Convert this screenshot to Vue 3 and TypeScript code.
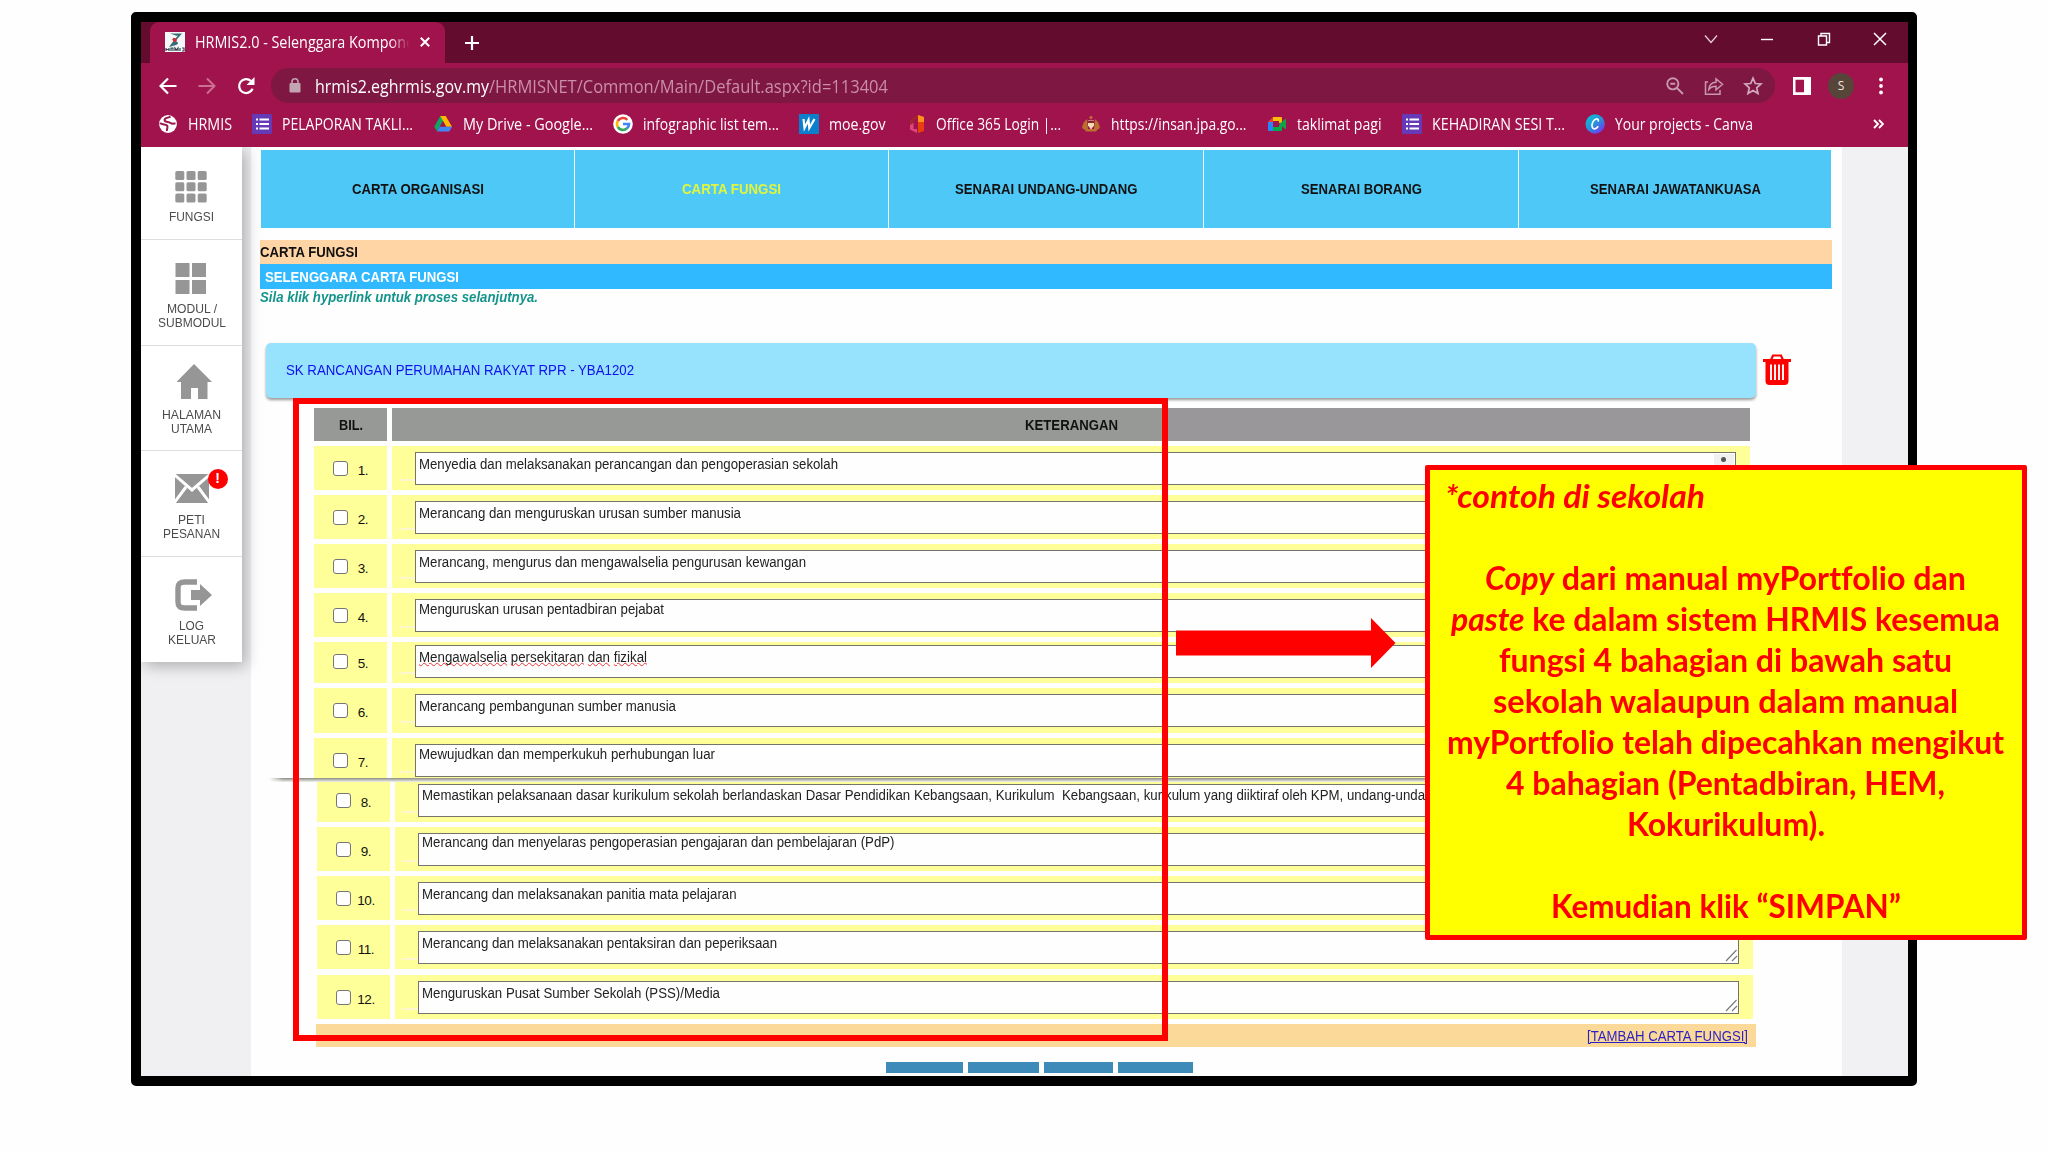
<script setup lang="ts">
import type { Directive } from 'vue'

/* Fits a single line of text to a known width in pixels. */
const vFit: Directive<HTMLElement, number> = {
  mounted(el, { value }) {
    const natural = el.getBoundingClientRect().width
    el.style.width = `${value}px`
    el.style.transform = `scaleX(${value / natural})`
  },
}

interface Bookmark { icon: string; label: string; w: number }
const bookmarks: Bookmark[] = [
  { icon: 'globe', label: 'HRMIS', w: 44 },
  { icon: 'form', label: 'PELAPORAN TAKLI...', w: 131 },
  { icon: 'drive', label: 'My Drive - Google...', w: 130 },
  { icon: 'google', label: 'infographic list tem...', w: 136 },
  { icon: 'moe', label: 'moe.gov', w: 56.5 },
  { icon: 'office', label: 'Office 365 Login |...', w: 125 },
  { icon: 'crest', label: 'https://insan.jpa.go...', w: 135.5 },
  { icon: 'meet', label: 'taklimat pagi', w: 84.5 },
  { icon: 'form', label: 'KEHADIRAN SESI T...', w: 133 },
  { icon: 'canva', label: 'Your projects - Canva', w: 138 },
]

interface MenuItem { icon: string; lines: [string, number][]; h: number }
const menu: MenuItem[] = [
  { icon: 'grid9', lines: [['FUNGSI', 45]], h: 93 },
  { icon: 'grid4', lines: [['MODUL /', 50], ['SUBMODUL', 68]], h: 106 },
  { icon: 'home', lines: [['HALAMAN', 59], ['UTAMA', 41]], h: 105 },
  { icon: 'mail', lines: [['PETI', 27], ['PESANAN', 57]], h: 106 },
  { icon: 'exit', lines: [['LOG', 25], ['KELUAR', 48]], h: 105 },
]

const tabs = [
  { label: 'CARTA ORGANISASI', w: 132, cell: 314 },
  { label: 'CARTA FUNGSI', w: 99, cell: 314 , active: true },
  { label: 'SENARAI UNDANG-UNDANG', w: 182.5, cell: 315 },
  { label: 'SENARAI BORANG', w: 121, cell: 315 },
  { label: 'SENARAI JAWATANKUASA', w: 171, cell: 312 },
]

/* h: row height, gap: space above, box: offset of the field, text: offset of its text line */
interface Row { n: number; label: string; w: number; h: number; gap: number; box: number; text: number; check: number; spell?: boolean; grip?: boolean; spin?: boolean }
const firstRows: Row[] = [
  { n: 1, label: 'Menyedia dan melaksanakan perancangan dan pengoperasian sekolah', w: 419, h: 44, gap: 5, box: 6, text: 1, check: 15, spin: true },
  { n: 2, label: 'Merancang dan menguruskan urusan sumber manusia', w: 322, h: 44, gap: 5, box: 6, text: 1, check: 15 },
  { n: 3, label: 'Merancang, mengurus dan mengawalselia pengurusan kewangan', w: 387, h: 44, gap: 5, box: 6, text: 1, check: 15 },
  { n: 4, label: 'Menguruskan urusan pentadbiran pejabat', w: 245, h: 44, gap: 5, box: 6, text: -1, check: 15 },
  { n: 5, label: 'Mengawalselia persekitaran dan fizikal', w: 228, h: 41, gap: 5, box: 3, text: 1, check: 12, spell: true },
  { n: 6, label: 'Merancang pembangunan sumber manusia', w: 257, h: 45, gap: 5, box: 6, text: 1, check: 15 },
  { n: 7, label: 'Mewujudkan dan memperkukuh perhubungan luar', w: 296, h: 40, gap: 5, box: 6, text: -1, check: 15 },
]
const secondRows: Row[] = [
  { n: 8, label: 'Memastikan pelaksanaan dasar kurikulum sekolah berlandaskan Dasar Pendidikan Kebangsaan, Kurikulum\u00a0 Kebangsaan, kurikulum yang diiktiraf oleh KPM, undang-unda', w: 1003, h: 40, gap: 4, box: 2, text: 0, check: 11 },
  { n: 9, label: 'Merancang dan menyelaras pengoperasian pengajaran dan pembelajaran (PdP)', w: 472.5, h: 44, gap: 5, box: 6, text: -2, check: 15 },
  { n: 10, label: 'Merancang dan melaksanakan panitia mata pelajaran', w: 314.5, h: 44, gap: 5, box: 6, text: 1, check: 15 },
  { n: 11, label: 'Merancang dan melaksanakan pentaksiran dan peperiksaan', w: 355, h: 44, gap: 5, box: 6, text: 1, check: 15, grip: true },
  { n: 12, label: 'Menguruskan Pusat Sumber Sekolah (PSS)/Media', w: 298, h: 44, gap: 6, box: 6, text: 1, check: 15, grip: true },
]
const sections = [
  { id: 'a', rows: firstRows },
  { id: 'b', rows: secondRows },
]
const buttons = [77, 71, 69, 75]
</script>

<template>
  <div class="slide">
    <div class="frame">
      <div class="tabstrip">
        <div class="tab">
          <svg width="20" height="20" viewBox="0 0 20 20">
            <rect width="20" height="20" fill="#f4f8f8" />
            <path d="M5 1.500h12L10.500 9c3 1 3.500 3 .5 4l-7 2 3-4 2-2.500-2-1 4-4z" fill="#356c78" />
            <path d="M8 4.500l5-1-3 3.500z" fill="#fff" /><circle cx="9.800" cy="8" r="2.100" fill="#d82930" />
            <path d="M1 16v3M4 16v3M1 17.500h3M6 19v-3h2v3M10 19v-3l1.500 2 1.500-2v3M15 16v3M17 19h2v-3h-2" stroke="#345" stroke-width="1.200" fill="none" />
          </svg>
          <span class="tab-title"><span v-fit="219" class="fit">HRMIS2.0 - Selenggara Kompone</span></span>
          <svg class="tab-x" width="10" height="10" viewBox="0 0 10 10"><path d="M.8.8l8.400 8.400M9.200.8L.8 9.200" stroke="#fff" stroke-width="2" /></svg>
        </div>
        <svg class="plus" width="16" height="16" viewBox="0 0 16 16"><path d="M8 1v14M1 8h14" stroke="#fff" stroke-width="2.200" /></svg>
        <div class="win">
          <svg width="14" height="14" viewBox="0 0 14 14"><path d="M1 3.500L7 10.500l6-7" fill="none" stroke="#e9d3dc" stroke-width="1.200" /></svg>
          <svg width="14" height="14" viewBox="0 0 14 14"><path d="M1 7.500h12" stroke="#fff" stroke-width="1.400" /></svg>
          <svg width="14" height="14" viewBox="0 0 14 14"><path d="M1.500 4h8v9h-8zM4 4V1.500h8.500v9H9.500" fill="none" stroke="#fff" stroke-width="1.400" /></svg>
          <svg width="14" height="14" viewBox="0 0 14 14"><path d="M1 1l12 12M13 1L1 13" stroke="#fff" stroke-width="1.500" /></svg>
        </div>
      </div>

      <div class="toolbar">
        <svg class="nav" width="18" height="18" viewBox="0 0 18 18"><path d="M17.500 9H2M9 1.500L1.500 9 9 16.500" fill="none" stroke="#fff" stroke-width="2.200" /></svg>
        <svg class="nav" width="18" height="18" viewBox="0 0 18 18"><path d="M.5 9H16M9 1.500L16.500 9 9 16.500" fill="none" stroke="#cc6f95" stroke-width="2" /></svg>
        <svg class="nav" width="18" height="18" viewBox="0 0 18 18"><path d="M15.600 11.800A7 7 0 1 1 14 4" fill="none" stroke="#fff" stroke-width="2.300" /><path d="M17.500 0v8h-8z" fill="#fff" /></svg>
        <div class="omnibox">
          <svg width="12" height="15" viewBox="0 0 12 15"><rect x=".5" y="5" width="11" height="9.500" rx="1" fill="#c2a4b2" /><path d="M3 6V3.800a3 3 0 0 1 6 0V6" fill="none" stroke="#c2a4b2" stroke-width="1.600" /></svg>
          <span class="url"><span v-fit="174" class="fit host">hrmis2.eghrmis.gov.my</span><span v-fit="399" class="fit path">/HRMISNET/Common/Main/Default.aspx?id=113404</span></span>
          <div class="omni-icons">
            <svg width="20" height="20" viewBox="0 0 20 20" fill="none" stroke="#c897ad" stroke-width="1.900"><circle cx="7.800" cy="7.800" r="5.600" /><path d="M12 12l6 6M5.300 7.800h5" /></svg>
            <svg width="20" height="20" viewBox="0 0 20 20" fill="none" stroke="#c897ad" stroke-width="1.500"><path d="M4 6H1.500v12.200h14.500V14" /><path d="M4.800 13.500c.4-4.500 3-7 7.200-7.200V2.800l6.500 5.500-6.500 5.500v-3.500c-3.500 0-5.500 1-7.200 3.200z" /></svg>
            <svg width="20" height="20" viewBox="0 0 20 20" fill="none" stroke="#d3aabd" stroke-width="1.700"><path d="M10 2.200l2.300 5.300 5.700.5-4.300 3.800 1.300 5.700-5-3-5 3 1.300-5.700L2 8l5.700-.5z" /></svg>
          </div>
        </div>
        <svg class="panel" width="18" height="18" viewBox="0 0 18 18"><path d="M0 0h18v18H0zM2.500 2.800v12.400h8.500V2.800z" fill="#fff" fill-rule="evenodd" /></svg>
        <span class="avatar">S</span>
        <svg class="dots" width="6" height="18" viewBox="0 0 6 18" fill="#fff"><circle cx="3" cy="2.500" r="1.900" /><circle cx="3" cy="9" r="1.900" /><circle cx="3" cy="15.500" r="1.900" /></svg>
      </div>

      <div class="bookmarks">
        <div v-for="b in bookmarks" :key="b.label" class="bookmark">
          <svg v-if="b.icon === 'globe'" width="20" height="20" viewBox="0 0 20 20"><circle cx="10" cy="10" r="8.900" fill="#fff" /><path d="M12.500 2.500c-2 1.500-6 1-6 3.500s4 1.500 6 3c1.500 1.200 3.500.5 5 .5M2 9c2 2 5.500 1 7 2.500s-.5 3 0 5.500" stroke="#9b174c" stroke-width="2" fill="none" /></svg>
          <svg v-else-if="b.icon === 'form'" width="20" height="20" viewBox="0 0 20 20"><rect width="20" height="20" rx="1" fill="#6639b7" /><path d="M4 5.500h2M4 10h2M4 14.500h2M7.500 5.500H17M7.500 10H17M7.500 14.500H17" stroke="#fff" stroke-width="2.200" /></svg>
          <svg v-else-if="b.icon === 'drive'" width="20" height="20" viewBox="0 0 20 20"><path d="M7.300 2h5.400L10 6.700 4 17.500l-2.700-4.800z" fill="#13a463" /><path d="M7.300 2h5.400l6.300 10.700h-5.600z" fill="#ffba00" /><path d="M6.700 12.700H19l-2.700 4.800H4z" fill="#4285f4" /></svg>
          <svg v-else-if="b.icon === 'google'" width="20" height="20" viewBox="0 0 20 20"><circle cx="10" cy="10" r="9.800" fill="#fff" /><g fill="none" stroke-width="2.600"><path d="M14.300 5.800A6 6 0 0 0 4.800 7" stroke="#ea4335" /><path d="M4.800 7a6 6 0 0 0 0 6" stroke="#fbbc05" /><path d="M4.800 13a6 6 0 0 0 9 1.600" stroke="#34a853" /><path d="M13.800 14.600A6 6 0 0 0 16 10h-6" stroke="#4285f4" /></g></svg>
          <svg v-else-if="b.icon === 'moe'" width="20" height="20" viewBox="0 0 20 20"><rect width="20" height="20" fill="#0b7fcb" /><path d="M4.500 5l1 9 4-8 .8 8L15.500 5" fill="none" stroke="#fff" stroke-width="2.200" /></svg>
          <svg v-else-if="b.icon === 'office'" width="20" height="20" viewBox="0 0 20 20"><path d="M4 6l8-5v3L7.500 6v7L4 15z" fill="#a4262c" /><path d="M4 11v4.500l7 3.500v-4H7.500V9z" fill="#e0467c" /><path d="M12 1l6 2v14l-6 2z" fill="#e8400c" /><path d="M12 1l6 2v5h-6z" fill="#ff8f1f" /></svg>
          <svg v-else-if="b.icon === 'crest'" width="20" height="20" viewBox="0 0 20 20"><path d="M10 1.500l2 2-2 2-2-2zM3 8l3-3 1 10H2l-1-2zM17 8l-3-3-1 10h5l1-2zM3 15h14l-2 2.500H5z" fill="#b9702f" /><path d="M7 6.500h6v5l-3 4-3-4z" fill="#f5d9b0" /><path d="M7 7h6v2H7z" fill="#8a2432" /></svg>
          <svg v-else-if="b.icon === 'meet'" width="20" height="20" viewBox="0 0 20 20"><path d="M6 3h8a1 1 0 0 1 1 1v5h-3V7H6z" fill="#fbbc04" /><path d="M6 3v5H1z" fill="#ea4335" /><path d="M1 8h5v9H2a1 1 0 0 1-1-1z" fill="#2684fc" /><path d="M6 13h6v-2h3v5a1 1 0 0 1-1 1H6z" fill="#00ac47" /><path d="M12 10l7-5.500v11z" fill="#11a24c" /></svg>
          <svg v-else width="20" height="20" viewBox="0 0 20 20"><defs><linearGradient id="cv" x1="0" y1="0" x2=".8" y2="1"><stop offset="0" stop-color="#0cc" /><stop offset=".55" stop-color="#2a8fdd" /><stop offset="1" stop-color="#7b2ff0" /></linearGradient></defs><circle cx="10.200" cy="10" r="9.700" fill="url(#cv)" /><path d="M13 7.500c1-2-.5-3-2-2.500-3 1-4.500 5-3.800 8 .7 2.500 4 2.500 6-.7" fill="none" stroke="#fff" stroke-width="1.700" /></svg>
          <span v-fit="b.w" class="fit">{{ b.label }}</span>
        </div>
        <svg class="more" width="11" height="10" viewBox="0 0 11 10"><path d="M1 1l4 4-4 4M6 1l4 4-4 4" fill="none" stroke="#fff" stroke-width="1.900" /></svg>
      </div>

      <div class="page">
        <aside class="rail">
          <nav class="menu">
            <div v-for="m in menu" :key="m.icon" class="menu-item" :style="{ height: m.h + 'px' }">
              <span class="menu-icon">
                <svg v-if="m.icon === 'grid9'" width="32" height="32" viewBox="0 0 32 32" fill="#969696"><template v-for="r in 3" :key="r"><rect v-for="c in 3" :key="c" :x="(c - 1) * 11.200 + .3" :y="(r - 1) * 11.200" width="9" height="9" rx="1.500" /></template></svg>
                <svg v-else-if="m.icon === 'grid4'" width="32" height="32" viewBox="0 0 32 32" fill="#969696"><path d="M.5 0h14v14H.5zM17 0h14v14H17zM.5 17h14v14H.5zM17 17h14v14H17z" /></svg>
                <svg v-else-if="m.icon === 'home'" class="home" width="36" height="36" viewBox="0 0 36 36"><path d="M18 0l18 18h-4.500v17H22V24h-7v11H5V18H.5z" fill="#969696" /></svg>
                <svg v-else-if="m.icon === 'mail'" class="mail" width="34" height="29" viewBox="0 0 34 29"><path d="M0 0h34v29H0z" fill="#969696" /><path d="M-1 .5l18 15.500L35 .5M-1 29l12-16M35 29L23 13" stroke="#fff" stroke-width="3" fill="none" /></svg>
                <svg v-else class="exit" width="37" height="32" viewBox="0 0 37 32"><path d="M22 3H10C5 3 3 5 3 9v14c0 4 2 6 7 6h12" fill="none" stroke="#969696" stroke-width="5.400" /><path d="M16 11h9V5l12 11-12 11v-6h-9z" fill="#969696" /></svg>
                <b v-if="m.icon === 'mail'" class="badge">!</b>
              </span>
              <span v-for="l in m.lines" :key="l[0]" class="menu-line"><span v-fit="l[1]" class="fit">{{ l[0] }}</span></span>
            </div>
          </nav>
        </aside>

        <main class="content">
          <div class="chart-tabs">
            <div v-for="t in tabs" :key="t.label" class="chart-tab" :class="{ active: t.active }" :style="{ width: t.cell + 'px' }"><span v-fit="t.w" class="fit">{{ t.label }}</span></div>
          </div>
          <div class="crumb"><span v-fit="98" class="fit">CARTA FUNGSI</span></div>
          <div class="heading"><span v-fit="194" class="fit">SELENGGARA CARTA FUNGSI</span></div>
          <div class="hint"><span v-fit="278" class="fit">Sila klik hyperlink untuk proses selanjutnya.</span></div>
          <div class="unit-row">
            <div class="unit"><span v-fit="348" class="fit">SK RANCANGAN PERUMAHAN RAKYAT RPR - YBA1202</span></div>
            <svg class="trash" width="28" height="31" viewBox="0 0 28 31"><path d="M0 5h28v3H0z" fill="#f00" /><path d="M8 6l2-4.500h8L20 6" fill="none" stroke="#f00" stroke-width="2.200" /><path d="M2.500 7h23v20q0 4-4 4h-15q-4 0-4-4z" fill="#f00" /><path d="M8 10.500v15.500M12 10.500v15.500M16 10.500v15.500M20 10.500v15.500" stroke="#fff" stroke-width="1.900" /></svg>
          </div>

          <div class="thead">
            <div class="bil"><span v-fit="24" class="fit">BIL.</span></div>
            <div class="ket"><span v-fit="93" class="fit">KETERANGAN</span></div>
          </div>
          <section v-for="s in sections" :key="s.id" class="rows" :class="s.id">
            <div v-for="r in s.rows" :key="r.n" class="row" :style="{ height: r.h + 'px', marginTop: r.gap + 'px' }">
              <div class="cell-n" :style="{ paddingTop: r.check + 'px' }">
                <i class="check"></i><span class="num">{{ r.n }}.</span>
              </div>
              <div class="cell-t" :style="{ paddingTop: r.box + 'px' }">
                <i class="dash"></i>
                <div class="field">
                  <div class="line" :style="{ marginTop: r.text + 'px' }">
                    <span v-fit="r.w" class="fit"><template v-if="r.spell"><template v-for="(word, i) in r.label.split(' ')" :key="i"><span class="spell">{{ word }}</span>{{ ' ' }}</template></template><template v-else>{{ r.label }}</template></span>
                  </div>
                  <svg v-if="r.grip" class="grip" width="13" height="13" viewBox="0 0 13 13"><path d="M1 12L11.500 1M7 12l5-5" stroke="#777" stroke-width="1.100" /></svg>
                  <span v-if="r.spin" class="spin"></span>
                </div>
              </div>
            </div>
          </section>
          <div class="foot"><a><span v-fit="161" class="fit">[TAMBAH CARTA FUNGSI]</span></a></div>
          <div class="buttons"><i v-for="w in buttons" :key="w" :style="{ width: w + 'px' }"></i></div>
        </main>
      </div>
    </div>

    <div class="highlight"></div>
    <svg class="arrow" width="220" height="50" viewBox="0 0 220 50"><path d="M0 12.500h195V0l24.500 25L195 50V37.500H0z" fill="#f00" /></svg>

    <div class="note">
      <p class="lead"><em v-fit="260" class="fit">*contoh di sekolah</em></p>
      <p>&nbsp;</p>
      <p><span v-fit="481" class="fit"><em>Copy</em> dari manual myPortfolio dan</span></p>
      <p><span v-fit="549" class="fit"><em>paste</em> ke dalam sistem HRMIS kesemua</span></p>
      <p><span v-fit="453" class="fit">fungsi 4 bahagian di bawah satu</span></p>
      <p><span v-fit="465" class="fit">sekolah walaupun dalam manual</span></p>
      <p><span v-fit="557" class="fit">myPortfolio telah dipecahkan mengikut</span></p>
      <p><span v-fit="439" class="fit">4 bahagian (Pentadbiran, HEM,</span></p>
      <p><span v-fit="198" class="fit">Kokurikulum).</span></p>
      <p>&nbsp;</p>
      <p><span v-fit="350" class="fit">Kemudian klik “SIMPAN”</span></p>
    </div>
  </div>
</template>

<style scoped>
* { box-sizing: border-box; }
svg { display: block; flex: none; }
.fit { display: inline-block; white-space: nowrap; transform-origin: left center; text-align: left; flex: none; }
.slide { position: relative; width: 2048px; height: 1152px; padding: 12px 0 0 131px; background: #fefefe; overflow: hidden; font-family: "Liberation Sans", Arial, sans-serif; font-size: 14px; color: #111; }
.frame { width: 1786px; height: 1074px; border: 10px solid #000; border-right-width: 9px; border-radius: 5px; background: #000; overflow: hidden; display: flex; flex-direction: column; }

.tabstrip { flex: none; height: 41px; background: #640c2e; display: flex; align-items: center; padding-left: 9px; font-family: "Open Sans", "Noto Sans", sans-serif; }
.tab { width: 295px; height: 41px; background: #a0134c; border-radius: 9px 9px 0 0; display: flex; align-items: center; padding: 0 0 1px 15px; color: #fff; font-size: 16px; }
.tab-title { margin-left: 10px; width: 219px; white-space: nowrap; -webkit-mask-image: linear-gradient(90deg, #000 89%, transparent 98%); mask-image: linear-gradient(90deg, #000 89%, transparent 98%); }
.tab-x { margin-left: 6px; }
.plus { margin-left: 19px; }
.win { margin-left: auto; margin-right: 21px; margin-top: -7px; display: flex; gap: 42.300px; }

.toolbar { flex: none; height: 45px; background: #a0134c; display: flex; align-items: center; padding-left: 18px; font-family: "Open Sans", "Noto Sans", sans-serif; }
.nav { margin-right: 21px; }
.omnibox { width: 1504px; height: 35px; margin-left: -5px; border-radius: 18px; background: #7e1742; display: flex; align-items: center; padding: 0 12px 0 18px; }
.url { margin-left: 14px; font-size: 17.500px; white-space: nowrap; display: flex; }
.host { color: #fff; }
.path { color: #cb8ea9; }
.omni-icons { margin-left: auto; display: flex; gap: 19px; }
.panel { margin-left: 18px; }
.avatar { margin-left: 17px; width: 26px; height: 26px; border-radius: 50%; background: #57453a; color: #f0e6dc; font-size: 12px; line-height: 26px; text-align: center; }
.dots { margin-left: 24px; }

.bookmarks { flex: none; height: 39px; padding: 0 0 7px 16.500px; background: #a0134c; display: flex; align-items: center; gap: 20.200px; color: #fff; font-family: "Open Sans", "Noto Sans", sans-serif; font-size: 16px; }
.bookmark { display: flex; align-items: center; gap: 10px; flex: none; height: 24px; line-height: 23px; }
.more { margin-left: auto; margin-right: 24px; }

.page { flex: 1; display: flex; background: #f1f0f2; min-height: 0; }
.rail { width: 110px; flex: none; position: relative; z-index: 1; background: #f0eff1; }
.menu { width: 101px; background: #fff; box-shadow: 4px 4px 14px rgba(0, 0, 0, .28); clip-path: inset(0 -30px -30px 0); }
.menu-item { display: flex; flex-direction: column; align-items: center; border-bottom: 1px solid #dedee0; color: #4b4b4b; font-size: 12.500px; line-height: 13.500px; }
.menu-item:last-child { border-bottom: 0; }
.menu-icon { position: relative; height: 32px; width: 33px; margin: 23px 1px 8px 0; display: block; }
.home { margin: -5px 0 0 1px; }
.exit { margin-top: -1px; }
.menu-item:first-child .menu-icon { margin-top: 24px; }
.badge { position: absolute; left: 33px; top: -5px; width: 20px; height: 20px; border-radius: 50%; background: #f00; color: #fff; font-size: 14px; line-height: 19px; text-align: center; }

.content { width: 1591px; flex: none; background: #fefefe; padding: 3px 0 0 9px; display: flex; flex-direction: column; }
.chart-tabs { display: flex; height: 78px; margin-left: 1px; width: 1570px; flex: none; }
.chart-tab { height: 78px; background: #4ec8f6; border-right: 1px solid #f4fbff; display: flex; align-items: center; justify-content: center; font-weight: bold; flex: none; padding-bottom: 1px; }
.chart-tab:last-child { border-right: 0; }
.active { color: #e2f53c; }
.crumb { flex: none; margin-top: 12px; width: 1572px; height: 24px; background: #ffd5a5; line-height: 25px; font-weight: bold; }
.heading { flex: none; width: 1572px; height: 25px; padding-left: 5px; background: #31b9ff; color: #fff; line-height: 26px; font-weight: bold; }
.hint { flex: none; height: 54px; line-height: 16px; font-weight: bold; font-style: italic; color: #14958b; }
.unit-row { flex: none; display: flex; align-items: center; margin-left: 6px; gap: 8px; height: 55px; }
.unit { width: 1490px; height: 55px; border-radius: 5px; background: #97e2fc; box-shadow: 0 2px 3px rgba(0, 0, 0, .4); padding-left: 20px; line-height: 54px; color: #1010ee; }
.trash { margin: -3px 0 0 -1px; }
.thead { flex: none; display: flex; gap: 5px; margin: 10px 0 0 54px; height: 33px; font-weight: bold; line-height: 34px; }
.bil, .ket { background: #979997; display: flex; justify-content: center; }
.bil { width: 73px; }
.ket { width: 1358px; background: linear-gradient(90deg, #979997 770px, #99979a 776px); }
.rows { flex: none; padding-left: 54px; display: flow-root; }
.rows.b { position: relative; padding-left: 57px; }
.rows.b::before { content: ""; position: absolute; left: 9px; top: 0; width: 1490px; height: 4px; background: linear-gradient(#8d8d86, #c9c9c4 60%, #f2f2ee); mask-image: linear-gradient(90deg, transparent, #000 14px); }
.row { display: flex; gap: 5px; }
.cell-n, .cell-t { background: #ffff99; display: flex; align-items: flex-start; overflow: hidden; }
.cell-n { width: 73px; padding-left: 19px; }
.check { width: 15px; height: 15px; border: 1px solid #767676; border-radius: 3px; background: #fff; flex: none; }
.num { width: 30px; text-align: center; line-height: 20px; font-size: 13.500px; letter-spacing: -.5px; }
.cell-t { width: 1358px; padding-left: 7px; }
.dash { width: 16px; height: 2px; margin-top: 27px; background: #fdf6cf; flex: none; }
.field { position: relative; width: 1321px; height: 33px; border: 1px solid #74746c; background: #fefefe; flex: none; display: flow-root; }
.line { padding-left: 3px; height: 20px; line-height: 20px; color: #222; white-space: nowrap; }
.spell { text-decoration: underline wavy #e33 1px; text-underline-offset: 0; text-decoration-skip-ink: none; }
.grip { position: absolute; right: 0; bottom: 1px; }
.spin { position: absolute; right: 1px; top: 1px; width: 20px; height: 15px; background: #f0f0f0; }
.spin::after { content: ""; position: absolute; left: 7px; top: 3px; width: 5px; height: 5px; border-radius: 50%; background: #555; }
.foot { flex: none; margin: 5px 0 0 56px; width: 1440px; height: 23px; background: #fbd998; text-align: right; padding-right: 8px; line-height: 24px; }
.foot a { color: #2a1fc4; }
.foot .fit { text-decoration: underline; }
.buttons { flex: none; display: flex; gap: 5px; margin: 15px 0 0 625.500px; }
.buttons i { height: 11px; background: #3e8bba; }

.highlight { position: absolute; left: 293px; top: 398px; width: 875px; height: 643px; border: 6px solid #f00; }
.arrow { position: absolute; left: 1176px; top: 618px; }
.note { position: absolute; left: 1425px; top: 465px; width: 602px; height: 475px; border: 5px solid #f00; border-radius: 2px; background: #ff0; color: #f00; font-family: Lato, Carlito, sans-serif; font-weight: bold; font-size: 32.500px; font-variant-ligatures: none; padding-top: 5px; text-align: center; }
.note p { margin: 0 0 0 -1px; height: 41px; line-height: 41px; white-space: nowrap; }
.note .lead { text-align: left; padding-left: 16px; }
</style>
